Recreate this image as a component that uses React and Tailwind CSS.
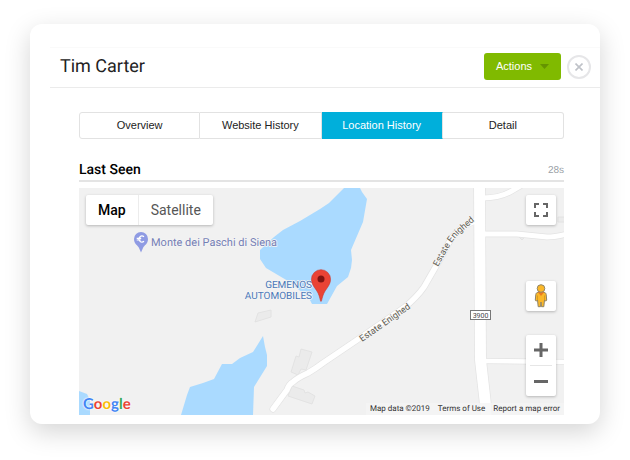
import { useState } from 'react'

const TABS = ['Overview', 'Website History', 'Location History', 'Detail']

export default function App() {
  return (
    <main className="min-h-screen bg-white px-[30px] pt-6 pb-9 [text-rendering:geometricPrecision]">
      <section className="overflow-hidden rounded-xl bg-white pt-[23px] pb-[9px] shadow-[0_8px_26px_rgba(0,0,0,0.17)]">
        <ContactHeader name="Tim Carter" />
        <div className="pt-6 pr-9 pl-[49px]">
          <TabBar />
          <div className="mt-[22px] flex items-center justify-between border-b-2 border-[#e4e4e4]">
            <h2 className="font-[Roboto,sans-serif] text-sm leading-[19px] font-medium text-black">
              Last Seen
            </h2>
            <span className="font-['Liberation_Sans',sans-serif] text-[10px] leading-4 text-[#9a9fa6]">28s</span>
          </div>
          <LocationMap />
        </div>
      </section>
    </main>
  )
}

function ContactHeader({ name }) {
  return (
    <header className="ml-5 flex items-center justify-between border-t border-b border-t-[#fafafa] border-b-[#ebebeb] pt-[5px] pr-[9px] pb-[7px] pl-[10px]">
      <h1 className="font-[Roboto,sans-serif] text-lg leading-[27px] font-normal text-[#222]">{name}</h1>
      <div className="flex items-center gap-[6px]">
        <button
          type="button"
          className="flex h-[27px] items-center gap-2 rounded-[3px] bg-[#80ba00] px-3 font-['Liberation_Sans',sans-serif] text-[11px] text-white"
        >
          Actions
          <svg width="9" height="5" viewBox="0 0 9 5" fill="#659400" aria-hidden="true">
            <path d="M0 0h9L4.5 5z" />
          </svg>
        </button>
        <button
          type="button"
          aria-label="Close"
          className="flex size-6 items-center justify-center rounded-full border-2 border-[#e6e6e8] bg-white"
        >
          <svg width="8" height="8" viewBox="0 0 8 8" stroke="#bfc2c8" strokeWidth="1.6" aria-hidden="true">
            <path d="M.5.5l7 7M7.5.5l-7 7" />
          </svg>
        </button>
      </div>
    </header>
  )
}

function TabBar() {
  const [active, setActive] = useState('Location History')

  return (
    <div role="tablist" className="grid grid-cols-4">
      {TABS.map((tab, index) => (
        <button
          key={tab}
          type="button"
          role="tab"
          aria-selected={tab === active}
          onClick={() => setActive(tab)}
          className={`h-[27px] border-y border-r border-r-[#e2e2e2] font-['Liberation_Sans',sans-serif] text-[11px] ${
            index === 0 ? 'rounded-l-[3px] border-l border-l-[#e2e2e2]' : ''
          } ${index === TABS.length - 1 ? 'rounded-r-[3px]' : ''} ${
            tab === active
              ? 'border-y-[#00afdb] bg-[#00afdb] text-white'
              : 'border-y-[#e2e2e2] bg-white text-[#222]'
          }`}
        >
          {tab}
        </button>
      ))}
    </div>
  )
}

function LocationMap() {
  return (
    <div className="relative mt-[6px] h-[227px] overflow-hidden bg-[#f1f1f1] font-[Roboto,sans-serif]">
      <MapCanvas />

      <div className="absolute top-[7px] left-[7px] flex rounded-[2px] bg-white shadow-[0_1px_3px_rgba(0,0,0,0.25)]">
        <button type="button" className="h-[30px] border-r border-[#ececec] px-3 text-sm font-medium text-black">
          Map
        </button>
        <button type="button" className="h-[30px] px-3 text-sm text-[#565656]">
          Satellite
        </button>
      </div>

      <div className="absolute top-[7px] right-2 flex flex-col">
        <ControlButton label="Toggle fullscreen view">
          <svg width="14" height="14" viewBox="0 0 14 14" fill="none" stroke="#666" strokeWidth="2">
            <path d="M1 5V1h4M9 1h4v4M13 9v4H9M5 13H1V9" />
          </svg>
        </ControlButton>
        <div className="mt-14">
          <ControlButton label="Street View">
            <Pegman />
          </ControlButton>
        </div>
        <div className="mt-6 flex w-[30px] flex-col items-center rounded-[2px] bg-white shadow-[0_1px_3px_rgba(0,0,0,0.25)]">
          <button type="button" aria-label="Zoom in" className="flex h-[30px] w-full items-center justify-center">
            <svg width="14" height="14" viewBox="0 0 14 14" fill="#666">
              <path d="M5.5 0h3v5.500H14v3H8.500V14h-3V8.500H0v-3h5.500z" />
            </svg>
          </button>
          <div className="h-px w-[22px] bg-[#e6e6e6]" />
          <button type="button" aria-label="Zoom out" className="flex h-[30px] w-full items-center justify-center">
            <svg width="14" height="3" viewBox="0 0 14 3" fill="#666">
              <path d="M0 0h14v3H0z" />
            </svg>
          </button>
        </div>
      </div>

      <div className="absolute bottom-px left-1 font-[Lato,sans-serif] text-[15px] leading-5 font-bold [text-shadow:0_0_2px_#fff,0_0_2px_#fff]">
        <span className="text-[#4285f4]">G</span>
        <span className="text-[#ea4335]">o</span>
        <span className="text-[#fbbc05]">o</span>
        <span className="text-[#4285f4]">g</span>
        <span className="text-[#34a853]">l</span>
        <span className="text-[#ea4335]">e</span>
      </div>

      <div className="absolute right-0 bottom-0 flex text-[8px] leading-3 text-[#333]">
        <span className="bg-[#f5f5f5]/80 px-1">Map data ©2019</span>
        <a href="#terms" className="bg-[#f5f5f5]/80 px-1">Terms of Use</a>
        <a href="#report" className="bg-[#f5f5f5]/80 px-1">Report a map error</a>
      </div>
    </div>
  )
}

function ControlButton({ label, children }) {
  return (
    <button
      type="button"
      aria-label={label}
      className="flex size-[30px] items-center justify-center rounded-[2px] bg-white shadow-[0_1px_3px_rgba(0,0,0,0.25)]"
    >
      {children}
    </button>
  )
}

function Pegman() {
  return (
    <svg width="14" height="24" viewBox="0 0 14 24">
      <path
        d="M4 8.500h6c1.500 0 2 .8 2.200 2l.5 5.500c0 .8-1 1.200-1.500.8l-.7-.8-.7 6.700H7.500L7 18l-.5 4.700H4.200L3.500 16l-.7.800c-.5.400-1.500 0-1.500-.8l.5-5.500c.2-1.200.7-2 2.200-2z"
        fill="#fbb829"
        stroke="#8f8468"
        strokeWidth="1"
      />
      <path d="M3.500 11.500V16M10.500 11.500V16" stroke="#c98f1f" strokeWidth=".7" />
      <path d="M3.800 8h6.400L7 12z" fill="#ec7a20" />
      <circle cx="7" cy="4.500" r="3.800" fill="#fbb829" stroke="#8f8468" strokeWidth="1" />
    </svg>
  )
}

const ROADS = [
  { d: 'M400.500-4L401.500 172L406 212L407.500 232', width: 11 },
  { d: 'M194 221L208 202Q210 196 214 194Q218 190 229 185Q236 181 244 175L278 152L326 119Q338 109 345 99L364 66Q370 53 376 46Q386 35 400 32', width: 5.5 },
  { d: 'M404 10Q420 10 431 4L443-3', width: 5 },
  { d: 'M404 46H438L468 49Q476 49 488 46', width: 5 },
  { d: 'M404 173L488 174', width: 4.5 },
]

const BUILDINGS = [
  'M179 125l13-3v7l-16 5z',
  'M222 161l11 3-6 18-5-1-3 6-7-3 5-16 3 1z',
  'M213 198l12 4 1 3 3-1 7 4-3 8-24-8z',
  'M437 46l6 6 7-7',
  'M479 34v-5h7v5z',
]

const haloText = { paintOrder: 'stroke', stroke: '#f5f5f5', strokeWidth: 1.5, strokeLinejoin: 'round' }

function MapCanvas() {
  return (
    <svg className="h-full w-full" viewBox="0 0 485 227" preserveAspectRatio="xMidYMid slice">
      <g fill="#aadaff">
        <path d="M265 0H281L283 4L288 11L284 34L272 62L273 72L272 80L269 89L258 98L248 116H233L230 110L209 93L187 80L181 71V62L195 49L204 42L221 33L241 21L250 15L258 7z" />
        <path d="M102 227L108 207L111 199L124 195L135 191L143 176H153L161 170L174 164L184 148L186 159L188 167V178L175 199L174 227z" />
        <path d="M0 203L8 206L11 212V227H0z" />
      </g>
      <g fill="#ebebeb" stroke="#dfdfdf" strokeWidth=".8">
        {BUILDINGS.map((d) => <path key={d} d={d} />)}
      </g>
      <g fill="none" stroke="#e3e3e3" strokeLinecap="round">
        {ROADS.map((road) => <path key={road.d} d={road.d} strokeWidth={road.width + 1.4} />)}
      </g>
      <g fill="none" stroke="#fff" strokeLinecap="round">
        {ROADS.map((road) => <path key={road.d} d={road.d} strokeWidth={road.width} />)}
      </g>

      <defs>
        <path id="road-lower" d="M283 154L336 117" />
        <path id="road-upper" d="M359 79L369 61Q374 52 380 46L399 30" />
      </defs>
      <g className="text-[9px]" fill="#5f5b50" style={haloText}>
        <text><textPath href="#road-lower">Estate Enighed</textPath></text>
        <text><textPath href="#road-upper">Estate Enighed</textPath></text>
      </g>

      <rect x="391.500" y="122.500" width="20" height="9" fill="#fff" stroke="#777" />
      <text x="401.500" y="130" textAnchor="middle" className="text-[7px]" fill="#444">3900</text>

      <path d="M62 64.500l-2-4.500c-1-2.500-5-4-5-9a7 7 0 0 1 14 0c0 5-4 6.500-5 9z" fill="#8f9be3" />
      <path d="M65 48.800a3 3 0 1 0 0 4.500M57.700 50.300h4.500M57.700 52h4" fill="none" stroke="#fff" strokeWidth="1.200" />
      <text x="72" y="58" className="text-[11px]" fill="#7580b5" style={haloText}>Monte dei Paschi di Siena</text>

      <text className="text-[10px]" fill="#4a78b8" textAnchor="end" style={haloText}>
        <tspan x="233" y="100">GEMENOS</tspan>
        <tspan x="233" y="111">AUTOMOBILES</tspan>
      </text>

      <path
        d="M242 113.500c-.8 0-1-5-3.500-9.500-2.500-4.300-6-7.500-6-12.800a9.500 9.500 0 0 1 19 0c0 5.300-3.500 8.500-6 12.800-2.500 4.500-2.700 9.500-3.500 9.500z"
        fill="#ea4335"
        stroke="#c9352b"
        strokeWidth=".6"
      />
      <circle cx="242" cy="91" r="3.500" fill="#811411" />
    </svg>
  )
}
